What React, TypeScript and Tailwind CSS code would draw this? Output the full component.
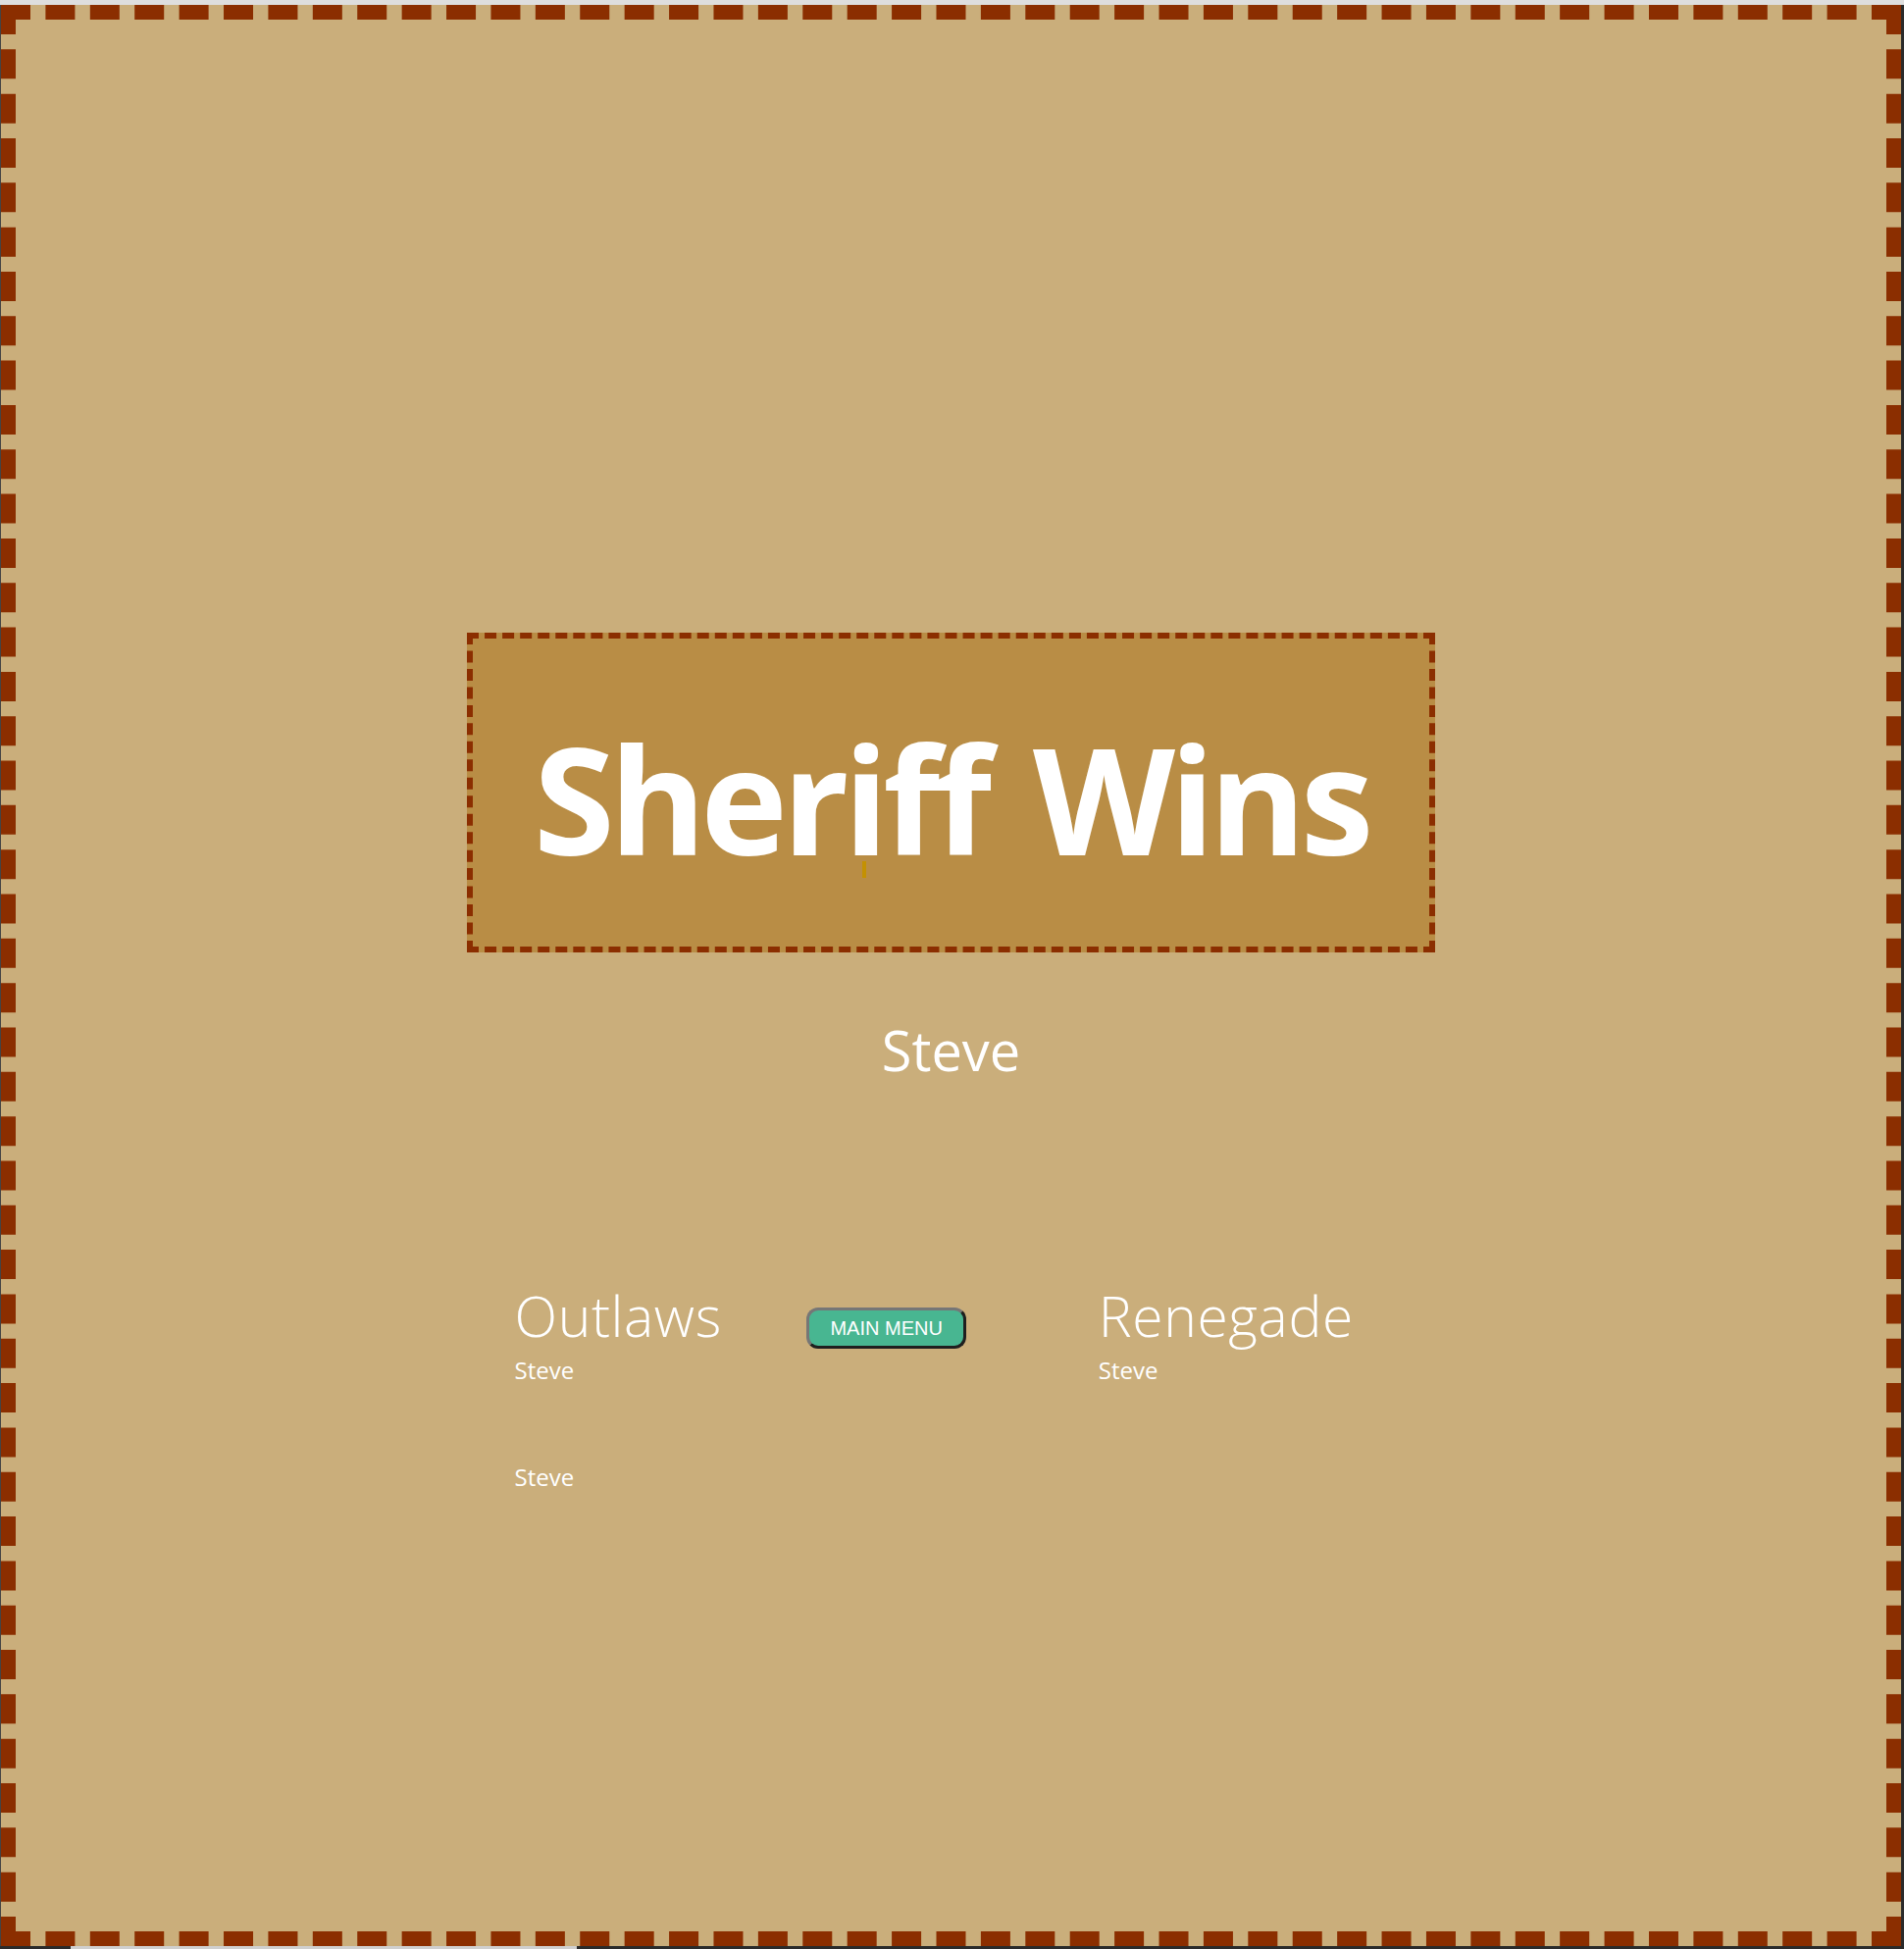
import React from 'react'

const sans = "font-['Open_Sans','Noto_Sans',sans-serif]"

function TeamColumn({ title, names }: { title: string; names: string[] }) {
  return (
    <div className="flex flex-col">
      <h2 className={`${sans} font-light text-[57px] leading-none tracking-[0.6px] text-white`}>{title}</h2>
      {names.map((name, i) => (
        <p
          key={i}
          className={`${sans} text-[24px] leading-none text-white ${i === 0 ? 'mt-[15px]' : 'mt-[85px]'}`}
        >
          {name}
        </p>
      ))}
    </div>
  )
}

export default function App() {
  return (
    <div className="flex h-screen w-full flex-col bg-[#2b2b2b]">
      {/* browser strip on top */}
      <div className="h-[5px] w-full bg-[#dedede]" />

      <div className="flex min-h-0 flex-1">
        <div className="w-px bg-[#444]" />
        <main className="flex-1 border-[15px] border-dashed border-[#8b2e00] bg-[#caae7b] pt-[625px]">
          <section className="relative mx-auto h-[326px] w-[987px] border-[6px] border-dashed border-[#8b2e00] bg-[#b98d45] pt-[88px] text-center">
            <h1 className={`${sans} text-[150px] font-bold leading-none tracking-[-5.5px] [word-spacing:14px] text-white`}>
              Sheriff Wins
            </h1>
            <span className="absolute left-[397px] top-[227px] h-[17px] w-[4px] bg-[#c49102]" />
          </section>

          <p className={`${sans} mt-[71px] text-center text-[56px] leading-none text-white`}>Steve</p>

          <div className="mx-auto mt-[215px] grid w-[896px] grid-cols-3 pl-[3px]">
            <TeamColumn title="Outlaws" names={['Steve', 'Steve']} />
            <div>
              <button className="mt-[20px] h-[42px] w-[163px] rounded-[12px] border-[3px] border-b-[#1f1f1f] border-l-[#767676] border-r-[#1f1f1f] border-t-[#767676] bg-[#48b691] font-['Liberation_Sans',Arial,sans-serif] text-[20px] leading-none text-white">
                MAIN MENU
              </button>
            </div>
            <TeamColumn title="Renegade" names={['Steve']} />
          </div>
        </main>
        <div className="w-[3px] bg-[#2b2b2b]" />
      </div>

      {/* scroll strip on bottom */}
      <div className="flex h-[3px] w-full">
        <div className="w-[72px] bg-[#2b2b2b]" />
        <div className="w-[516px] bg-[#cfcfcf]" />
        <div className="flex-1 bg-[#2b2b2b]" />
      </div>
    </div>
  )
}
